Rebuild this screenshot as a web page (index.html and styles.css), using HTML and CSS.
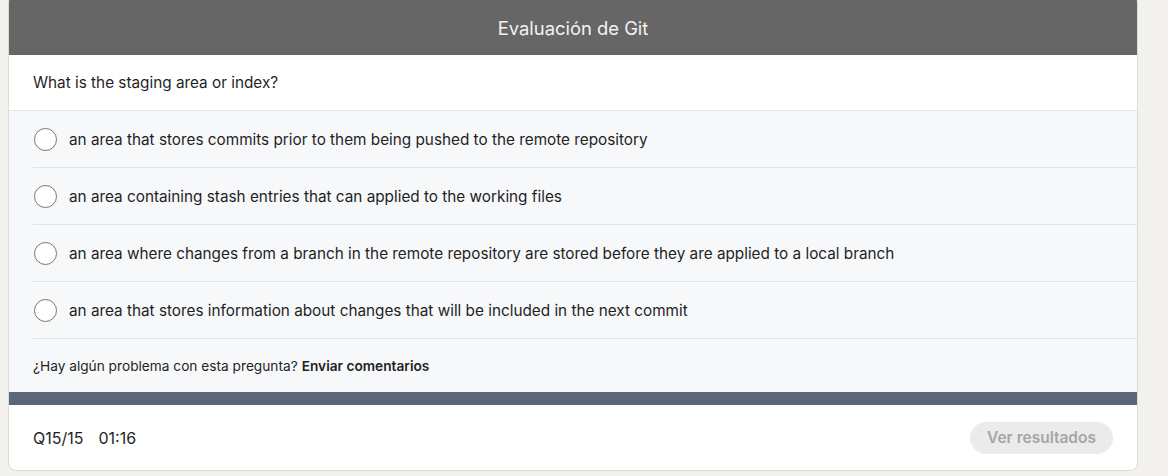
FILE: index.html
```html
<!DOCTYPE html>
<html lang="es">
<head>
    <meta charset="UTF-8">
    <meta name="viewport" content="width=device-width, initial-scale=1.0">
    <title>Evaluación de Git</title>
    <link rel="stylesheet" href="styles.css">
</head>
<body>
    <div class="quiz-card">
        <div class="quiz-header">Evaluación de Git</div>

        <div class="question">What is the staging area or index?</div>

        <ul class="options">
            <li class="option"><span class="radio"></span>an area that stores commits prior to them being pushed to the remote repository</li>
            <li class="option"><span class="radio"></span>an area containing stash entries that can applied to the working files</li>
            <li class="option"><span class="radio"></span>an area where changes from a branch in the remote repository are stored before they are applied to a local branch</li>
            <li class="option"><span class="radio"></span>an area that stores information about changes that will be included in the next commit</li>
        </ul>

        <div class="feedback">¿Hay algún problema con esta pregunta? <strong>Enviar comentarios</strong></div>

        <div class="progress"><div class="progress-fill" style="width: 100%"></div></div>

        <div class="quiz-footer">
            <div class="meta">
                <span>Q15/15</span>
                <span>01:16</span>
            </div>
            <button class="results-btn" disabled>Ver resultados</button>
        </div>
    </div>
</body>
</html>
```

FILE: styles.css
```css
body {
    margin: 0;
    padding: 0 30px 0 8px;
    background: #f2f1ee;
    font-family: Inter, "Noto Sans", "Liberation Sans", sans-serif;
    color: #1f1f1f;
}

.quiz-card {
    width: 1128px;
    margin-top: -6px;
    background: #fff;
    border: 1px solid #dedcd8;
    border-radius: 8px;
    overflow: hidden;
}

.quiz-header {
    height: 60px;
    padding-top: 6px;
    box-sizing: border-box;
    background: #666666;
    color: #f2f2f2;
    font-size: 18.4px;
    display: flex;
    align-items: center;
    justify-content: center;
}

.question {
    height: 56px;
    box-sizing: border-box;
    padding: 0 24px;
    display: flex;
    align-items: center;
    font-size: 15.3px;
    border-bottom: 1px solid #e6e6e6;
}

.options {
    list-style: none;
    margin: 0;
    padding: 0 0 0 24px;
    background: #f7f8fa;
}

.option {
    height: 57px;
    box-sizing: border-box;
    display: flex;
    align-items: center;
    gap: 12px;
    font-size: 15.3px;
    border-bottom: 1px solid #e2e3e5;
}

.radio {
    width: 23px;
    height: 23px;
    box-sizing: border-box;
    margin-left: 1px;
    border: 1.5px solid #767676;
    border-radius: 50%;
    background: #fff;
    flex-shrink: 0;
}

.feedback {
    height: 53px;
    box-sizing: border-box;
    padding: 0 24px;
    display: flex;
    align-items: center;
    gap: 4px;
    font-size: 13.7px;
    background: #f7f8fa;
}

.feedback strong {
    font-weight: 600;
}

.progress {
    height: 13px;
    background: #e4e6ea;
}

.progress-fill {
    height: 100%;
    background: #5b6678;
}

.quiz-footer {
    height: 65px;
    box-sizing: border-box;
    padding: 0 24px;
    display: flex;
    align-items: center;
    justify-content: space-between;
}

.meta {
    display: flex;
    gap: 15px;
    font-size: 16px;
}

.results-btn {
    height: 32px;
    padding: 0 17px;
    border: none;
    border-radius: 16px;
    background: #ebebeb;
    color: #a6a6a6;
    font-family: inherit;
    font-size: 15.5px;
    font-weight: 600;
}
```
